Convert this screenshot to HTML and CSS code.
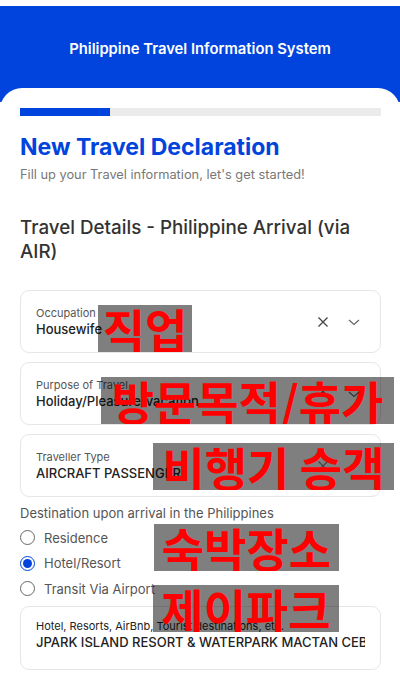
FILE: index.html
```html
<!DOCTYPE html>
<html>
<head>
<meta charset="utf-8">
<link rel="stylesheet" href="styles.css">
</head>
<body>
<div class="topstrip"></div>
<header class="header">
  <div class="header-title">Philippine Travel Information System</div>
</header>
<main class="card">
  <div class="progress"><div class="progress-fill"></div></div>
  <h1 class="title">New Travel Declaration</h1>
  <p class="subtitle">Fill up your Travel information, let's get started!</p>
  <h2 class="section">Travel Details - Philippine Arrival (via AIR)</h2>

  <div class="field">
    <div class="field-text">
      <div class="label">Occupation</div>
      <div class="value">Housewife</div>
    </div>
    <div class="icons">
      <svg class="ic" width="14" height="14" viewBox="0 0 14 14"><path d="M2.5 2.5 L11.5 11.5 M11.5 2.5 L2.5 11.5" stroke="#444" stroke-width="1.3" fill="none"/></svg>
      <svg class="ic" width="14" height="14" viewBox="0 0 14 14"><path d="M2 5 L7 9.5 L12 5" stroke="#666" stroke-width="1.2" fill="none"/></svg>
    </div>
    <div class="ov ov1">직업</div>
  </div>

  <div class="field">
    <div class="field-text">
      <div class="label">Purpose of Travel</div>
      <div class="value">Holiday/Pleasure/vacation</div>
    </div>
    <div class="icons">
      <svg class="ic" width="14" height="14" viewBox="0 0 14 14"><path d="M2 9 L7 4.5 L12 9" stroke="#444" stroke-width="1.2" fill="none"/></svg>
      <svg class="ic" width="14" height="14" viewBox="0 0 14 14"><path d="M2 5 L7 9.5 L12 5" stroke="#666" stroke-width="1.2" fill="none"/></svg>
    </div>
    <div class="ov ov2">방문목적/휴가</div>
  </div>

  <div class="field">
    <div class="field-text">
      <div class="label">Traveller Type</div>
      <div class="value upper">AIRCRAFT PASSENGER</div>
    </div>
    <div class="icons">
      <svg class="ic" width="14" height="14" viewBox="0 0 14 14"><path d="M2.5 2.5 L11.5 11.5 M11.5 2.5 L2.5 11.5" stroke="#888" stroke-width="1.2" fill="none"/></svg>
      <svg class="ic" width="14" height="14" viewBox="0 0 14 14"><path d="M3 7.5 L6 10 L12 3.5" stroke="#111" stroke-width="1.8" fill="none"/></svg>
    </div>
    <div class="ov ov3">비행기 승객</div>
  </div>

  <div class="dest">
    <div class="dest-label">Destination upon arrival in the Philippines</div>
    <label class="radio"><span class="dot"></span>Residence</label>
    <label class="radio"><span class="dot on"></span>Hotel/Resort</label>
    <label class="radio"><span class="dot"></span>Transit Via Airport</label>
    <div class="ov ov4">숙박장소</div>
    <div class="ov ov5">제이파크</div>
  </div>

  <div class="field hotel">
    <div class="field-text">
      <div class="label dark">Hotel, Resorts, AirBnb, Tourist destinations, etc.</div>
      <div class="value upper clip">JPARK ISLAND RESORT &amp; WATERPARK MACTAN CEBU</div>
    </div>
  </div>
</main>
</body>
</html>
```

FILE: styles.css
```css
* { box-sizing: border-box; }
html, body { margin: 0; padding: 0; }
body {
  width: 400px;
  height: 686px;
  overflow: hidden;
  background: #fff;
  font-family: "Inter", "Noto Sans", sans-serif;
}
.topstrip { height: 6px; background: #fff; }
.header {
  background: #0044dd;
  height: 96px;
  padding-top: 34px;
  text-align: center;
}
.header-title {
  color: #fff;
  font-size: 14.8px;
  font-weight: 600;
}
.card {
  position: relative;
  margin-top: -14px;
  background: #fff;
  border-radius: 22px 22px 0 0;
  padding: 20px 19px 0 20px;
}
.progress {
  height: 8px;
  background: #ebebeb;
}
.progress-fill {
  width: 90px;
  height: 8px;
  background: #0044dd;
}
.title {
  margin: 16px 0 0;
  color: #0044dd;
  font-size: 23px;
  font-weight: 700;
  line-height: 30px;
}
.subtitle {
  margin: 4px 0 0;
  color: #777;
  font-size: 12.8px;
  line-height: 18px;
}
.section {
  margin: 32px 0 0;
  color: #333;
  font-size: 18.8px;
  font-weight: 500;
  line-height: 24px;
}
.field {
  position: relative;
  margin-top: 9px;
  height: 63px;
  border: 1px solid #e6e6e6;
  border-radius: 9px;
  display: flex;
  align-items: center;
  padding: 0 15px;
}
.section + .field { margin-top: 26px; }
.field-text { flex: 1; min-width: 0; }
.label {
  color: #555;
  font-size: 11px;
  line-height: 14px;
}
.label.dark { color: #222; }
.value {
  color: #222;
  font-size: 13px;
  font-weight: 500;
  line-height: 18px;
}
.clip { white-space: nowrap; overflow: hidden; }
.icons {
  display: flex;
  gap: 17px;
  align-items: center;
  padding-right: 4px;
}
.ic { display: block; }
.dest {
  position: relative;
  margin-top: 7px;
}
.dest-label {
  color: #555;
  font-size: 13px;
  line-height: 18px;
  margin-bottom: 3px;
}
.radio {
  display: flex;
  align-items: center;
  gap: 9px;
  height: 25.5px;
  color: #555;
  font-size: 13px;
}
.dot {
  width: 15px;
  height: 15px;
  border: 1px solid #666;
  border-radius: 50%;
  display: inline-flex;
  align-items: center;
  justify-content: center;
}
.dot.on { border-color: #0044dd; }
.dot.on::after {
  content: "";
  width: 9px;
  height: 9px;
  border-radius: 50%;
  background: #0044dd;
}
.hotel { margin-top: 4px; height: 64px; align-items: flex-start; padding-top: 12px; }
.ov {
  position: absolute;
  background: rgba(0, 0, 0, 0.5);
  color: #ff0000;
  font-family: "Noto Sans CJK KR", sans-serif;
  font-weight: 700;
  font-size: 46px;
  line-height: 47px;
  height: 47px;
  white-space: nowrap;
  overflow: hidden;
  text-align: center;
  z-index: 2;
}
.ov1 { left: 77px; top: 14px; width: 94px; }
.ov2 { left: 80px; top: 14px; width: 293px; }
.ov3 { left: 132px; top: 8px; width: 241px; }
.ov4 { left: 134px; top: 20px; width: 185px; }
.ov5 { left: 133px; top: 81px; width: 186px; }
```
